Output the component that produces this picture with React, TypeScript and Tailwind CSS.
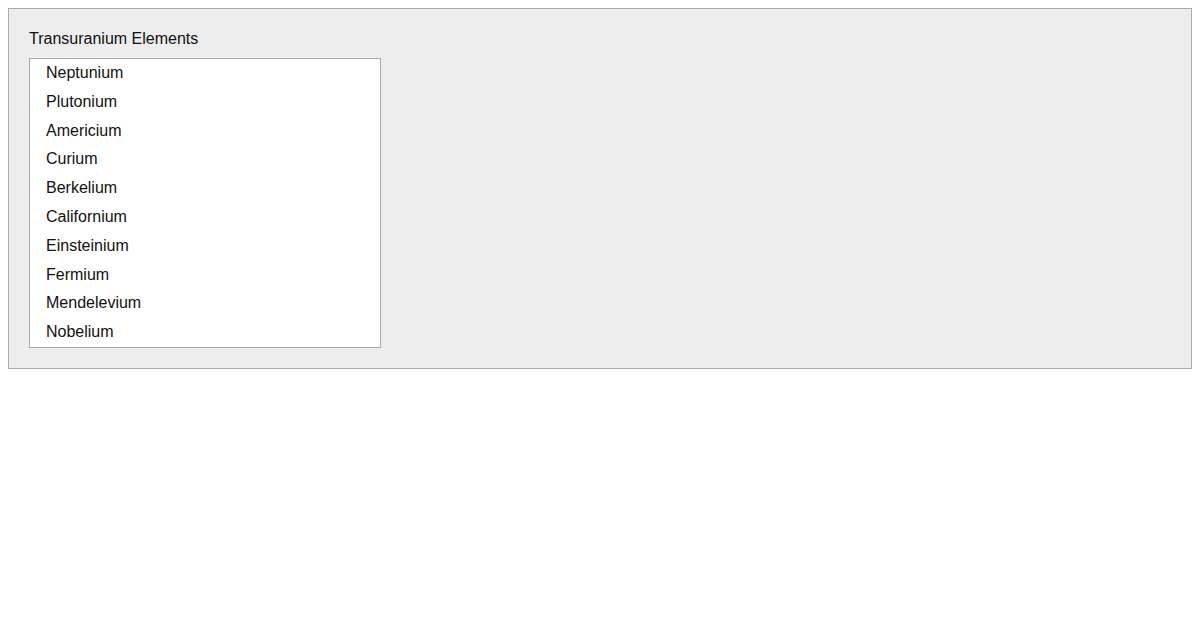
const elements = [
  "Neptunium",
  "Plutonium",
  "Americium",
  "Curium",
  "Berkelium",
  "Californium",
  "Einsteinium",
  "Fermium",
  "Mendelevium",
  "Nobelium",
]

export default function App() {
  return (
    <div className="p-2 bg-white min-h-[630px] font-['Liberation_Sans',Arial,sans-serif] text-[16px] text-[#111]">
      <div className="border border-[#ababab] bg-[#ededed] px-5 pt-5 pb-5">
        <div className="h-[19px] leading-[19px] mb-[10px]">Transuranium Elements</div>
        <ul className="w-[352px] border border-[#ababab] bg-white">
          {elements.map((name) => (
            <li key={name} className="h-[28.8px] leading-[27px] pl-4">
              {name}
            </li>
          ))}
        </ul>
      </div>
    </div>
  )
}
